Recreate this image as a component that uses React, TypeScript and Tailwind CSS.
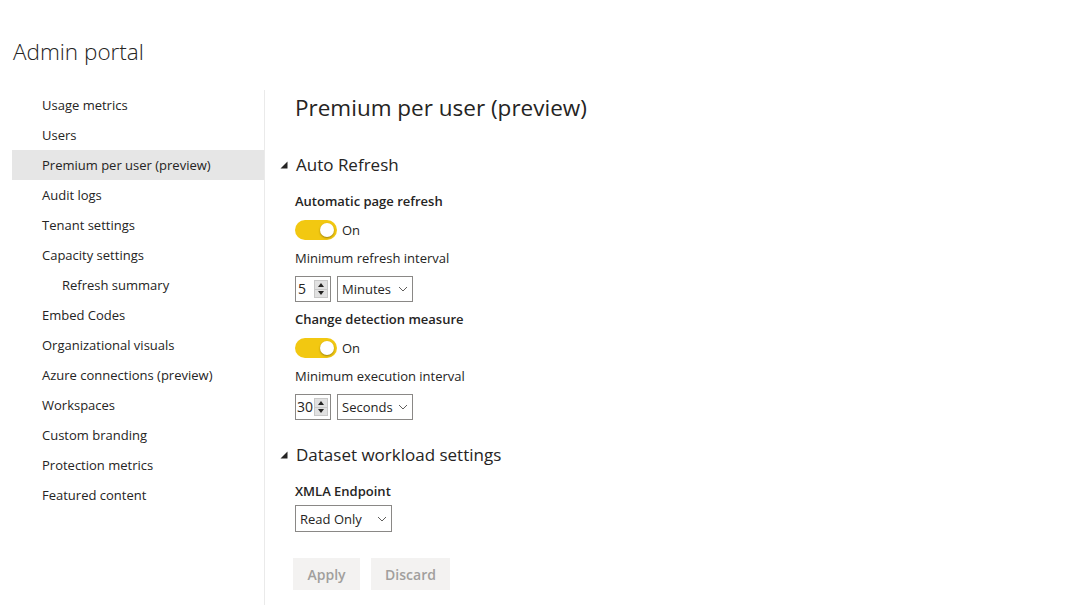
import React from "react";

const navItems: { label: string; sub?: boolean; active?: boolean }[] = [
  { label: "Usage metrics" },
  { label: "Users" },
  { label: "Premium per user (preview)", active: true },
  { label: "Audit logs" },
  { label: "Tenant settings" },
  { label: "Capacity settings" },
  { label: "Refresh summary", sub: true },
  { label: "Embed Codes" },
  { label: "Organizational visuals" },
  { label: "Azure connections (preview)" },
  { label: "Workspaces" },
  { label: "Custom branding" },
  { label: "Protection metrics" },
  { label: "Featured content" },
];

function Triangle() {
  return (
    <svg width="8" height="8" viewBox="0 0 8 8" className="shrink-0">
      <polygon points="7.5,0.5 7.5,7.5 0.5,7.5" fill="#252423" />
    </svg>
  );
}

function Chevron() {
  return (
    <svg width="10" height="6" viewBox="0 0 10 6" className="shrink-0">
      <polyline points="1,1 5,5 9,1" fill="none" stroke="#605e5c" strokeWidth="1" />
    </svg>
  );
}

function Toggle() {
  return (
    <div className="flex items-center h-[20px]">
      <div className="relative w-[42px] h-[20px] rounded-full bg-[#f2c811]">
        <div className="absolute right-[3px] top-[3px] w-[14px] h-[14px] rounded-full bg-white shadow-[0_1px_2px_rgba(0,0,0,0.35)]" />
      </div>
      <span className="ml-[5px] text-[13px] leading-[20px] text-[#252423]">On</span>
    </div>
  );
}

function NumberInput({ value, tight }: { value: string; tight?: boolean }) {
  return (
    <div className="flex items-center w-[36px] h-[26px] border border-[#8a8886] bg-white">
      <span className={`text-[14px] leading-[24px] text-[#252423] ${tight ? "pl-[1px]" : "pl-[2px]"}`}>{value}</span>
      <div className="flex flex-col ml-auto mr-[2px] w-[14px] h-[18px] bg-[#e1e1e1] border border-[#c8c8c8]">
        <div className="flex-1 flex items-center justify-center border-b border-[#c8c8c8]">
          <svg width="6" height="4" viewBox="0 0 6 4"><polygon points="3,0 6,4 0,4" fill="#252423" /></svg>
        </div>
        <div className="flex-1 flex items-center justify-center">
          <svg width="6" height="4" viewBox="0 0 6 4"><polygon points="0,0 6,0 3,4" fill="#252423" /></svg>
        </div>
      </div>
    </div>
  );
}

function Select({ label, width }: { label: string; width: string }) {
  return (
    <div className={`flex items-center justify-between ${width} border border-[#8a8886] bg-white pl-[4px] pr-[4px]`}>
      <span className="text-[13px] leading-[24px] text-[#252423]">{label}</span>
      <Chevron />
    </div>
  );
}

function SectionHeader({ title }: { title: string }) {
  return (
    <div className="flex items-center h-[26px] -ml-[15px]">
      <Triangle />
      <span className="ml-[8px] text-[17px] leading-[26px] text-[#252423]">{title}</span>
    </div>
  );
}

export default function App() {
  return (
    <div
      className="w-full h-[605px] bg-white overflow-hidden text-[#252423]"
      style={{ fontFamily: '"Open Sans", "Noto Sans", sans-serif' }}
    >
      <div className="h-[90px] pl-[13px] pt-[36px]">
        <h1 className="text-[22.5px] leading-[32px] font-light text-[#252423]">Admin portal</h1>
      </div>
      <div className="flex h-[515px]">
        <nav className="w-[253px] ml-[12px] border-r border-[#eaeaea] h-full">
          {navItems.map((it) => (
            <div
              key={it.label}
              className={`h-[30px] pt-[1px] flex items-center text-[13px] text-[#252423] ${it.sub ? "pl-[50px]" : "pl-[30px]"} ${it.active ? "bg-[#e6e6e6]" : ""}`}
            >
              {it.label}
            </div>
          ))}
        </nav>
        <main className="pl-[30px] pt-[3px] flex flex-col">
          <h2 className="text-[22.5px] leading-[30px] text-[#252423]">Premium per user (preview)</h2>

          <div className="mt-[29px]">
            <SectionHeader title="Auto Refresh" />
          </div>
          <div className="mt-[13px] text-[13px] leading-[20px] font-semibold">Automatic page refresh</div>
          <div className="mt-[9px]"><Toggle /></div>
          <div className="mt-[8px] text-[13px] leading-[20px]">Minimum refresh interval</div>
          <div className="mt-[8px] flex gap-[6px]">
            <NumberInput value="5" />
            <Select label="Minutes" width="w-[76px] h-[26px]" />
          </div>
          <div className="mt-[7px] text-[13px] leading-[20px] font-semibold">Change detection measure</div>
          <div className="mt-[9px]"><Toggle /></div>
          <div className="mt-[8px] text-[13px] leading-[20px]">Minimum execution interval</div>
          <div className="mt-[8px] flex gap-[6px]">
            <NumberInput value="30" tight />
            <Select label="Seconds" width="w-[76px] h-[26px]" />
          </div>

          <div className="mt-[22px]">
            <SectionHeader title="Dataset workload settings" />
          </div>
          <div className="mt-[13px] text-[13px] leading-[20px] font-semibold">XMLA Endpoint</div>
          <div className="mt-[4px]">
            <Select label="Read Only" width="w-[97px] h-[27px]" />
          </div>

          <div className="mt-[26px] -ml-[2px] flex gap-[11px]">
            <button className="w-[67px] h-[32px] bg-[#f3f2f1] text-[#a19f9d] text-[14px] font-semibold">Apply</button>
            <button className="w-[79px] h-[32px] bg-[#f3f2f1] text-[#a19f9d] text-[14px] font-semibold">Discard</button>
          </div>
        </main>
      </div>
    </div>
  );
}
